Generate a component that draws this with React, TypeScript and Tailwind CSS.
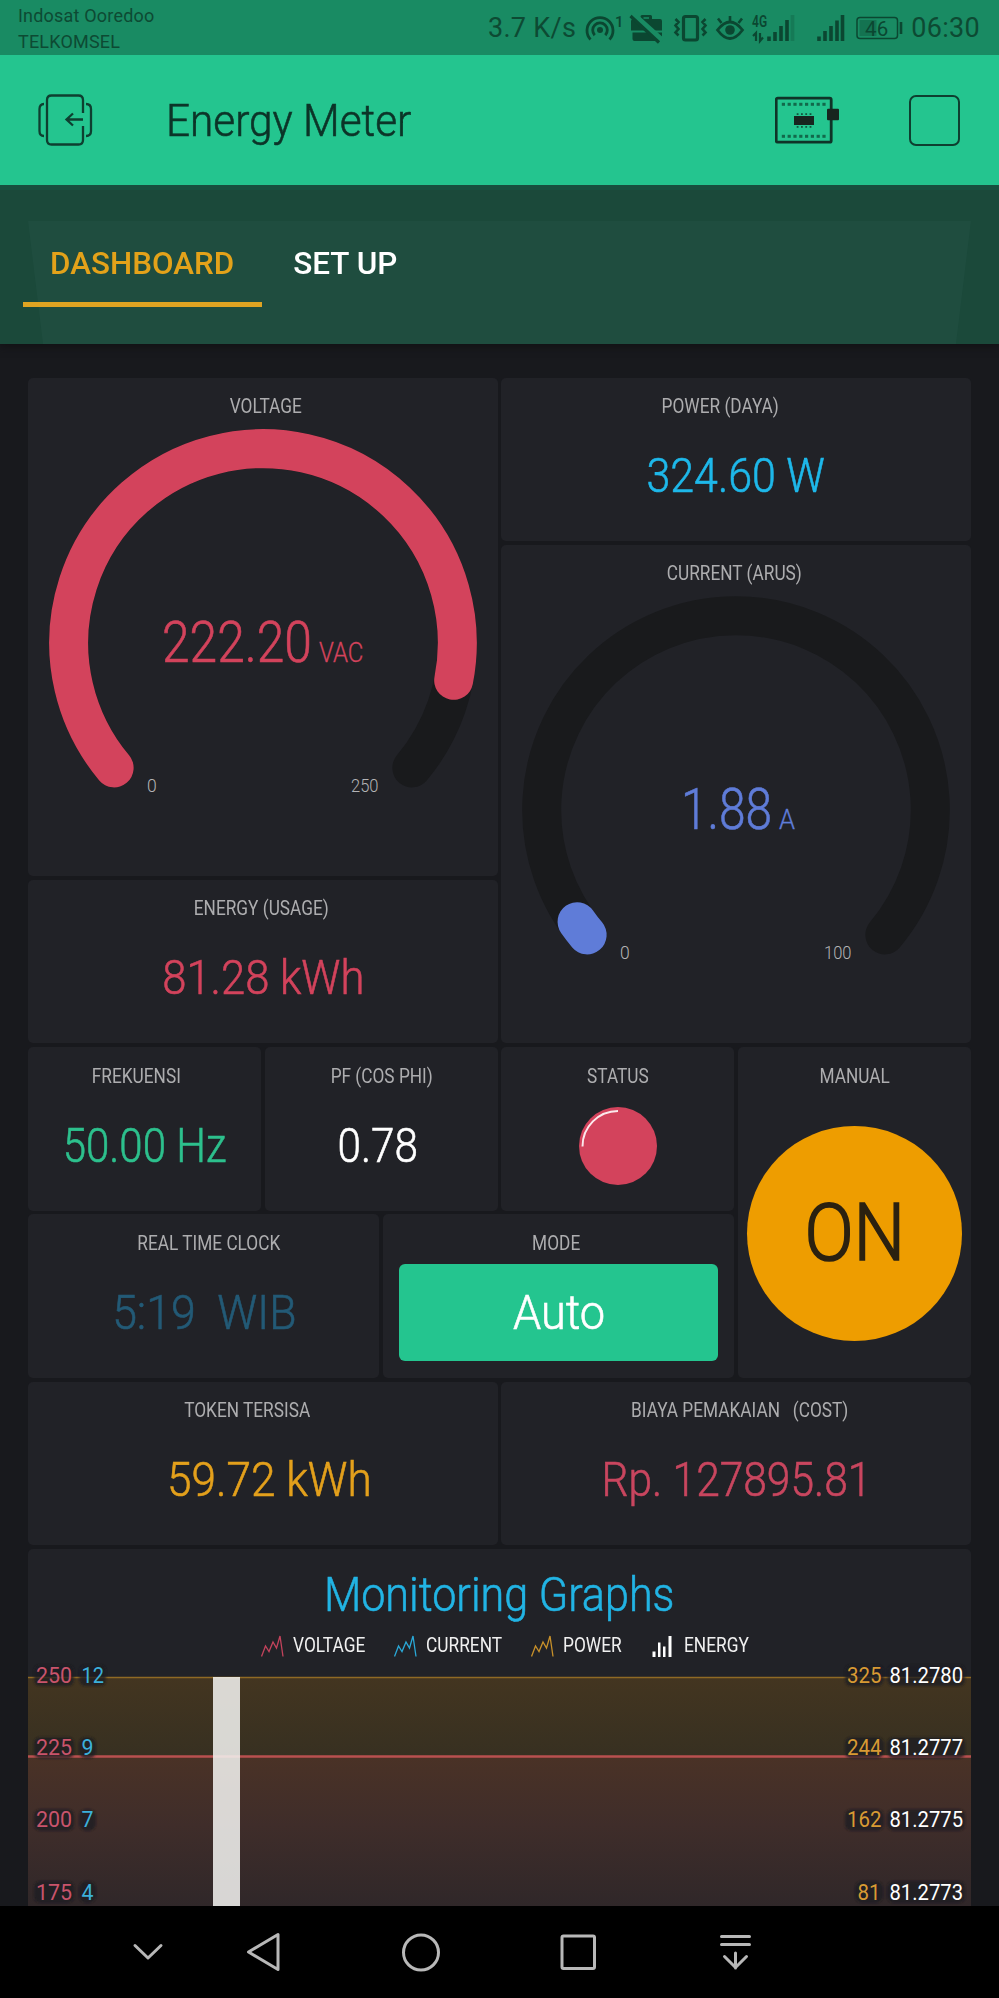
import clsx from 'clsx';
import { ReactNode } from 'react';

const FONT = 'Roboto, "Liberation Sans", sans-serif';

interface CardProps {
    title: string;
    className?: string;
    titleClassName?: string;
    children?: ReactNode;
}

function Card({ title, className, titleClassName, children }: CardProps) {
    return (
        <section
            className={clsx(
                'overflow-hidden rounded-[5px] bg-[#212227] pt-[17.5px]',
                className,
            )}
        >
            <h2
                className={clsx(
                    'text-center text-[19.5px] leading-6 whitespace-pre text-[#adadaf]',
                    titleClassName,
                )}
            >
                <span className="inline-block scale-x-[0.885]">{title}</span>
            </h2>
            {children}
        </section>
    );
}

function Value({
    className,
    children,
}: {
    className?: string;
    children: ReactNode;
}) {
    return (
        <p className="mt-[29px] text-center text-[48px] leading-[56px] font-light whitespace-pre [-webkit-text-stroke:0.6px]">
            <span className={clsx('inline-block', className)}>{children}</span>
        </p>
    );
}

interface GaugeProps {
    value: number;
    max: number;
    text: string;
    unit: string;
    color: string;
    textX: [number, number];
    unitX: [number, number];
}

const CENTER = 214;
const RADIUS = 194.3;
const START = 140;
const SWEEP = 260;

// Arco desde el inicio del medidor hasta la fracción indicada
function arc(fraction: number) {
    const point = (deg: number) => {
        const rad = (deg * Math.PI) / 180;
        return `${CENTER + RADIUS * Math.cos(rad)} ${CENTER + RADIUS * Math.sin(rad)}`;
    };
    const large = SWEEP * fraction > 180 ? 1 : 0;
    return `M${point(START)} A${RADIUS} ${RADIUS} 0 ${large} 1 ${point(START + SWEEP * fraction)}`;
}

function Gauge({ value, max, text, unit, color, textX, unitX }: GaugeProps) {
    return (
        <svg
            viewBox="0 0 428 380"
            className="mx-auto mt-[10px] block h-[380px] w-[428px]"
            fontFamily={FONT}
            fontWeight="300"
        >
            <g fill="none" strokeWidth="39" strokeLinecap="round">
                <path d={arc(1)} stroke="#191a1c" />
                <path d={arc(value / max)} stroke={color} />
            </g>
            <g fill={color} stroke={color}>
                <text
                    x={textX[0]}
                    y="232.5"
                    fontSize="57"
                    strokeWidth="0.6"
                    textLength={textX[1]}
                    lengthAdjust="spacingAndGlyphs"
                >
                    {text}
                </text>
                <text
                    x={unitX[0]}
                    y="232.5"
                    fontSize="27"
                    strokeWidth="0.3"
                    textLength={unitX[1]}
                    lengthAdjust="spacingAndGlyphs"
                >
                    {unit}
                </text>
            </g>
            <g fill="#b4b4b6" fontSize="17.5">
                <text x="98" y="362.7">
                    0
                </text>
                <text
                    x="302"
                    y="362.7"
                    textLength="27.5"
                    lengthAdjust="spacingAndGlyphs"
                >
                    {max}
                </text>
            </g>
        </svg>
    );
}

function StatusIcons() {
    return (
        <svg
            viewBox="580 0 324 55"
            className="h-[55px] w-[324px]"
            fill="none"
            stroke="#0b4731"
            fontFamily={FONT}
        >
            {/* Hotspot */}
            <g strokeWidth="2.8">
                <path d="M590.5 39.5a13 13 0 1 1 19 0" />
                <path d="M594.7 35.2a7.3 7.3 0 1 1 10.6 0" />
            </g>
            <circle cx="600" cy="30" r="3" fill="#0b4731" stroke="none" />
            <text
                x="615"
                y="27"
                fontSize="15"
                fill="#0b4731"
                stroke="none"
                fontWeight="500"
            >
                1
            </text>
            {/* Maletín tachado */}
            <path
                d="M640.5 19v-2.5q0-1.500 1.500-1.500h8.500q1.500 0 1.500 1.500V19h8q2 0 2 2v9.500h-31V21q0-2 2-2zM632.500 32.500H662V39q0 2-2 2h-25.500q-2 0-2-2z"
                fill="#0b4731"
                stroke="none"
            />
            <path d="M643.500 18h5.500" stroke="#198b63" strokeWidth="1.500" />
            <path d="M632 14l30 27" stroke="#198b63" strokeWidth="7" />
            <path d="M630.500 16l28.500 26.500" strokeWidth="3.200" />
            {/* Vibración */}
            <rect x="683.5" y="16.5" width="14" height="23.5" rx="2" strokeWidth="3.2" />
            <path
                d="M675.5 19l3 3-3 3.500 3 3.500-3 3.500 3 3M705.500 19l-3 3 3 3.500-3 3.500 3 3.500-3 3"
                strokeWidth="2.6"
            />
            {/* Ojo */}
            <path
                d="M717.5 30q12.500-16 25 0-12.500 17-25 0z"
                strokeWidth="2.8"
            />
            <circle cx="730" cy="30" r="4.8" fill="#0b4731" stroke="none" />
            <path d="M730 21v-5M721.500 23l-3.500-4.500M738.500 23l3.500-4.500" strokeWidth="2.6" />
            {/* Señal 4G */}
            <text
                x="752"
                y="27"
                fontSize="16"
                fontWeight="600"
                fill="#0b4731"
                stroke="none"
                textLength="15.5"
                lengthAdjust="spacingAndGlyphs"
            >
                4G
            </text>
            <path d="M753 36l3-3v8M760 33v8l3-3.500" strokeWidth="2.2" />
            <g strokeWidth="3.6">
                <path d="M769 41v-4.500M775 41v-9M781 41v-15M787 41V20" />
                <path d="M792.500 41V15" opacity="0.25" />
                <path d="M819 41v-4.500M825 41v-10M831 41V26M837 41V20.500M842.500 41V15" />
            </g>
            {/* Batería */}
            <rect x="857" y="17.5" width="40.5" height="21" rx="3" strokeWidth="1.5" />
            <rect x="859.5" y="20" width="17" height="16" fill="#0b4731" opacity="0.35" stroke="none" />
            <path d="M901 22v12" strokeWidth="2.6" />
            <text
                x="865"
                y="35.5"
                fontSize="20.5"
                fill="#0b4731"
                stroke="none"
            >
                46
            </text>
        </svg>
    );
}

function StatusBar() {
    return (
        <div className="flex h-[55px] shrink-0 justify-between bg-[#198b63] pr-[19px] pl-[18px] text-[#0d4a33]">
            <div className="pt-[3px] text-[18px] leading-[26px] tracking-[0.2px]">
                <p>Indosat Ooredoo</p>
                <p>TELKOMSEL</p>
            </div>
            <div className="flex text-[27px] leading-[57px] tracking-[0.3px]">
                <span className="mr-1">3.7 K/s</span>
                <StatusIcons />
                <span className="ml-[7px]">06:30</span>
            </div>
        </div>
    );
}

function AppHeader() {
    const pins = [0, 1, 2, 3, 4, 5, 6, 7];

    return (
        <header className="relative z-20 flex h-[130px] shrink-0 items-center bg-[#24c58f] pr-[39px] pl-[37px]">
            <svg
                viewBox="0 0 56 54"
                className="h-[54px] w-14"
                fill="none"
                stroke="#0e3f30"
                strokeWidth="2.3"
            >
                <path d="M46 20V7q0-4.500-4.500-4.500h-27q-4.500 0-4.500 4.500v40q0 4.500 4.500 4.500h27q4.500 0 4.500-4.500V33" />
                <path d="M46 26.500H30M36 20.500l-6.500 6 6.500 6" />
                <path d="M7 11q-4.500 0-4.500 5v22q0 5 4.500 5M49 11q5 0 5 5v22q0 5-5 5" />
            </svg>
            <h1 className="mt-0.5 ml-[73px] w-[558px] text-[44px] leading-[52px] font-light text-[#0c3428] [-webkit-text-stroke:0.6px]">
                <span className="inline-block origin-left scale-x-[0.962]">
                    Energy Meter
                </span>
            </h1>
            <svg
                viewBox="776 94 66 52"
                className="ml-[51px] h-[52px] w-[66px] shrink-0"
                fill="#17251f"
            >
                <rect
                    x="777.2"
                    y="98.2"
                    width="55"
                    height="44"
                    rx="1.5"
                    fill="none"
                    stroke="#0f3428"
                    strokeWidth="2.8"
                />
                <rect x="828" y="108.7" width="12" height="11.5" rx="1" />
                <rect x="795" y="116" width="20" height="9" />
                {pins.map((pin) => (
                    <g key={pin} fill="#12694b">
                        <rect x={782.8 + pin * 5.8} y="102.8" width="3.2" height="3" />
                        <rect x={782.8 + pin * 5.8} y="134.8" width="3.2" height="3" />
                    </g>
                ))}
                {pins.slice(0, 4).map((pin) => (
                    <g key={pin} fill="#12573f">
                        <rect x={797.7 + pin * 4.3} y="113.2" width="1.8" height="1.8" />
                        <rect x={797.7 + pin * 4.3} y="126" width="1.8" height="1.8" />
                    </g>
                ))}
            </svg>
            <div className="ml-auto h-[51px] w-[51px] shrink-0 rounded-[7px] border-2 border-[#0e3f30]" />
        </header>
    );
}

function Tabs() {
    return (
        <nav className="relative z-10 flex h-[159px] shrink-0 bg-[#1b493a] pl-[23px] text-[31px] leading-9 font-medium text-white shadow-[0_2px_8px_#111113]">
            <svg
                viewBox="0 0 999 159"
                className="absolute inset-0 h-full w-full"
            >
                <rect width="999" height="5" fill="#17503f" />
                <path d="M28 36h943l-15 123H43z" fill="#1f4d3f" />
            </svg>
            <div className="relative h-[122px] w-[239px] border-b-5 border-[#dfa422] pt-[61px] text-center text-[#e3a21a]">
                <span className="inline-block scale-x-[1.01]">DASHBOARD</span>
            </div>
            <div className="relative h-[122px] w-[167px] pt-[61px] text-center">
                <span className="inline-block scale-x-[1.015]">SET UP</span>
            </div>
        </nav>
    );
}

function LineIcon({ color }: { color: string }) {
    return (
        <svg
            viewBox="0 0 23 22"
            className="h-[22px] w-[23px]"
            fill="none"
            stroke={color}
            strokeWidth="1.3"
        >
            <path d="M0.500 21.500L4.500 11l3.500 5.500L12 7l3.500 6L19 1l3 20.500" />
        </svg>
    );
}

function BarsIcon() {
    return (
        <svg viewBox="0 0 23 22" className="h-[22px] w-[23px]" fill="white">
            <path d="M0.500 16.500h3V22h-3zM6 7.500h2.500V22H6zM11 11.500h2.500V22H11zM16.500 1h3v21h-3z" />
        </svg>
    );
}

const legend = [
    { label: 'VOLTAGE', color: '#c4435c', width: 'w-[133px]' },
    { label: 'CURRENT', color: '#2aa9d8', width: 'w-[137px]' },
    { label: 'POWER', color: '#c8912a', width: 'w-[121px]' },
    { label: 'ENERGY', color: null, width: 'w-[110px]' },
];

const axis = [
    ['250', '12', '325', '81.2780'],
    ['225', '9', '244', '81.2777'],
    ['200', '7', '162', '81.2775'],
    ['175', '4', '81', '81.2773'],
];

function AxisLabel({
    x,
    y,
    width,
    color,
    children,
}: {
    x: number;
    y: number;
    width: number;
    color: string;
    children: string;
}) {
    return (
        <>
            {/* El halo oscuro separa la etiqueta de las líneas */}
            <rect
                x={x - 2}
                y={y - 18}
                width={width + 4}
                height="21"
                rx="6"
                fill="#1c1c22"
                opacity="0.75"
                filter="url(#halo)"
            />
            <text
                x={x}
                y={y}
                fill={color}
                textLength={width}
                lengthAdjust="spacingAndGlyphs"
            >
                {children}
            </text>
        </>
    );
}

function MonitoringChart() {
    return (
        <svg
            viewBox="0 0 943 250"
            className="block h-[250px] w-[943px]"
            fontFamily={FONT}
            fontSize="22"
        >
            <defs>
                <linearGradient id="power" x1="0" y1="0" x2="0" y2="1">
                    <stop offset="0" stopColor="#433520" />
                    <stop offset="1" stopColor="#373021" />
                </linearGradient>
                <linearGradient id="voltage" x1="0" y1="0" x2="0" y2="1">
                    <stop offset="0" stopColor="#4a3226" />
                    <stop offset="0.45" stopColor="#3f2d2a" />
                    <stop offset="1" stopColor="#2f2729" />
                </linearGradient>
                <filter id="halo" x="-20%" y="-30%" width="140%" height="160%">
                    <feGaussianBlur stdDeviation="1.2" />
                </filter>
            </defs>
            <rect y="18" width="943" height="80" fill="url(#power)" />
            <rect y="98" width="943" height="152" fill="url(#voltage)" />
            <path d="M0 18.500h943" stroke="#8f6a24" strokeWidth="1.3" />
            <path d="M0 97.500h943" stroke="#b9504f" strokeWidth="2.6" />
            <rect
                x="185"
                y="18"
                width="27"
                height="232"
                fill="#f3f3f1"
                opacity="0.86"
            />
            {axis.map(([voltage, current, power, energy], i) => {
                const y = 24 + i * 72.2;
                const short = power.length < 3;
                return (
                    <g key={voltage}>
                        <AxisLabel x={8} y={y} width={36} color="#c9546c">
                            {voltage}
                        </AxisLabel>
                        <AxisLabel
                            x={53.5}
                            y={y}
                            width={current.length > 1 ? 22.5 : 12}
                            color="#3cb0da"
                        >
                            {current}
                        </AxisLabel>
                        <AxisLabel
                            x={short ? 829.5 : 819}
                            y={y}
                            width={short ? 23 : 34.5}
                            color="#d89a33"
                        >
                            {power}
                        </AxisLabel>
                        <AxisLabel x={861.5} y={y} width={73.5} color="#ffffff">
                            {energy}
                        </AxisLabel>
                    </g>
                );
            })}
        </svg>
    );
}

function NavigationBar() {
    return (
        <footer className="relative z-10 h-[92.5px] shrink-0 bg-black">
            <svg
                viewBox="0 1905.5 999 92.5"
                className="block h-full w-full"
                fill="none"
                stroke="#b8b8b8"
                strokeWidth="3"
                strokeLinejoin="round"
                strokeLinecap="round"
            >
                <path d="M135 1945l13 12.500 13-12.500" />
                <path d="M278 1934v35l-29.500-17.500z" />
                <circle cx="421" cy="1952" r="17.5" />
                <rect x="562" y="1935.5" width="32.5" height="32.5" rx="1.5" />
                <path d="M721.500 1936h28M721.500 1944h28M735.500 1952.500v15M724.500 1956l11 11 11-11" />
            </svg>
        </footer>
    );
}

export default function App() {
    return (
        <div className="flex h-[1998px] w-[999px] flex-col overflow-hidden bg-[#18191d] font-[Roboto,'Liberation_Sans',sans-serif]">
            <StatusBar />
            <AppHeader />
            <Tabs />
            <main className="min-h-0 flex-1 overflow-hidden px-7 pt-[33.5px]">
                <div className="grid grid-cols-8 grid-rows-[repeat(7,163.5px)] gap-x-[3.5px] gap-y-[3.9px]">
                    <Card
                        title="VOLTAGE"
                        className="col-span-4 row-span-3"
                        titleClassName="pl-1.5"
                    >
                        <Gauge
                            value={222.2}
                            max={250}
                            text="222.20"
                            unit="VAC"
                            color="#d3435c"
                            textX={[113, 150]}
                            unitX={[270, 44.5]}
                        />
                    </Card>
                    <Card
                        title="POWER (DAYA)"
                        className="col-span-4"
                        titleClassName="pr-8"
                    >
                        <Value className="scale-x-[0.895] text-[#1eb8ea]">
                            324.60 W
                        </Value>
                    </Card>
                    <Card
                        title="CURRENT (ARUS)"
                        className="col-span-4 row-span-3"
                        titleClassName="pr-1"
                    >
                        <Gauge
                            value={1.88}
                            max={100}
                            text="1.88"
                            unit="A"
                            color="#5f7cd8"
                            textX={[159, 91]}
                            unitX={[257, 16]}
                        />
                    </Card>
                    <Card
                        title="ENERGY (USAGE)"
                        className="col-span-4"
                        titleClassName="pr-1"
                    >
                        <Value className="scale-x-[0.908] text-[#d3435c]">
                            81.28 kWh
                        </Value>
                    </Card>
                    <Card
                        title="FREKUENSI"
                        className="col-span-2"
                        titleClassName="pr-4"
                    >
                        <Value className="scale-x-[0.875] text-[#2dc08d]">
                            50.00 Hz
                        </Value>
                    </Card>
                    <Card
                        title="PF (COS PHI)"
                        className="col-span-2"
                        titleClassName="pl-0.5"
                    >
                        <Value className="mr-2 scale-x-[0.88] text-white">
                            0.78
                        </Value>
                    </Card>
                    <Card title="STATUS" className="col-span-2">
                        <svg
                            viewBox="0 0 78 78"
                            className="mx-auto mt-[18px] block h-[78px] w-[78px]"
                        >
                            <circle cx="39" cy="39" r="39" fill="#d3435c" />
                            <path
                                d="M3.500 39.500A35.500 35.500 0 0 1 39 4"
                                fill="none"
                                stroke="#fbe9ec"
                                strokeWidth="2"
                            />
                        </svg>
                    </Card>
                    <Card title="MANUAL" className="col-span-2 row-span-2">
                        <button
                            type="button"
                            className="mx-auto mt-[37.5px] flex h-[215px] w-[215px] items-center justify-center rounded-full bg-[#ee9d00] text-[79px] leading-none font-light text-[#2b2110] [-webkit-text-stroke:1.6px]"
                        >
                            <span className="inline-block scale-x-[0.92]">
                                ON
                            </span>
                        </button>
                    </Card>
                    <Card
                        title="REAL TIME CLOCK"
                        className="col-span-3"
                        titleClassName="pl-2.5"
                    >
                        <Value className="ml-0.5 scale-x-[0.928] text-[#235a76]">
                            {'5:19  WIB'}
                        </Value>
                    </Card>
                    <Card
                        title="MODE"
                        className="col-span-3"
                        titleClassName="pr-1"
                    >
                        <button
                            type="button"
                            className="mx-auto mt-2 flex h-[97px] w-[319px] items-center justify-center rounded-md bg-[#24c58f] pt-0.5 text-[48px] leading-[56px] font-light text-white [-webkit-text-stroke:0.6px]"
                        >
                            <span className="inline-block scale-x-[0.94]">
                                Auto
                            </span>
                        </button>
                    </Card>
                    <Card
                        title="TOKEN TERSISA"
                        className="col-span-4"
                        titleClassName="pr-8"
                    >
                        <Value className="ml-3 scale-x-[0.92] text-[#e3a01c]">
                            59.72 kWh
                        </Value>
                    </Card>
                    <Card
                        title="BIAYA PEMAKAIAN   (COST)"
                        className="col-span-4"
                        titleClassName="pl-2"
                    >
                        <Value className="scale-x-[0.885] text-[#c9465f]">
                            Rp. 127895.81
                        </Value>
                    </Card>
                </div>

                <section className="mt-1 h-[400px] rounded-t-[5px] bg-[#212227] pt-[18px]">
                    <h2 className="text-center text-[48px] leading-[56px] font-light text-[#22b4e4] [-webkit-text-stroke:0.6px]">
                        <span className="inline-block scale-x-[0.898]">
                            Monitoring Graphs
                        </span>
                    </h2>
                    <div className="mt-2.5 flex h-[26px] items-center pl-[233px] text-[19.5px] leading-6 text-[#f0f0f0]">
                        {legend.map(({ label, color, width }) => (
                            <div
                                key={label}
                                className={clsx(
                                    'flex items-center gap-[9px]',
                                    width,
                                )}
                            >
                                {color ? (
                                    <LineIcon color={color} />
                                ) : (
                                    <BarsIcon />
                                )}
                                <span className="inline-block origin-left scale-x-[0.888]">
                                    {label}
                                </span>
                            </div>
                        ))}
                    </div>
                    <MonitoringChart />
                </section>
            </main>
            <NavigationBar />
        </div>
    );
}
